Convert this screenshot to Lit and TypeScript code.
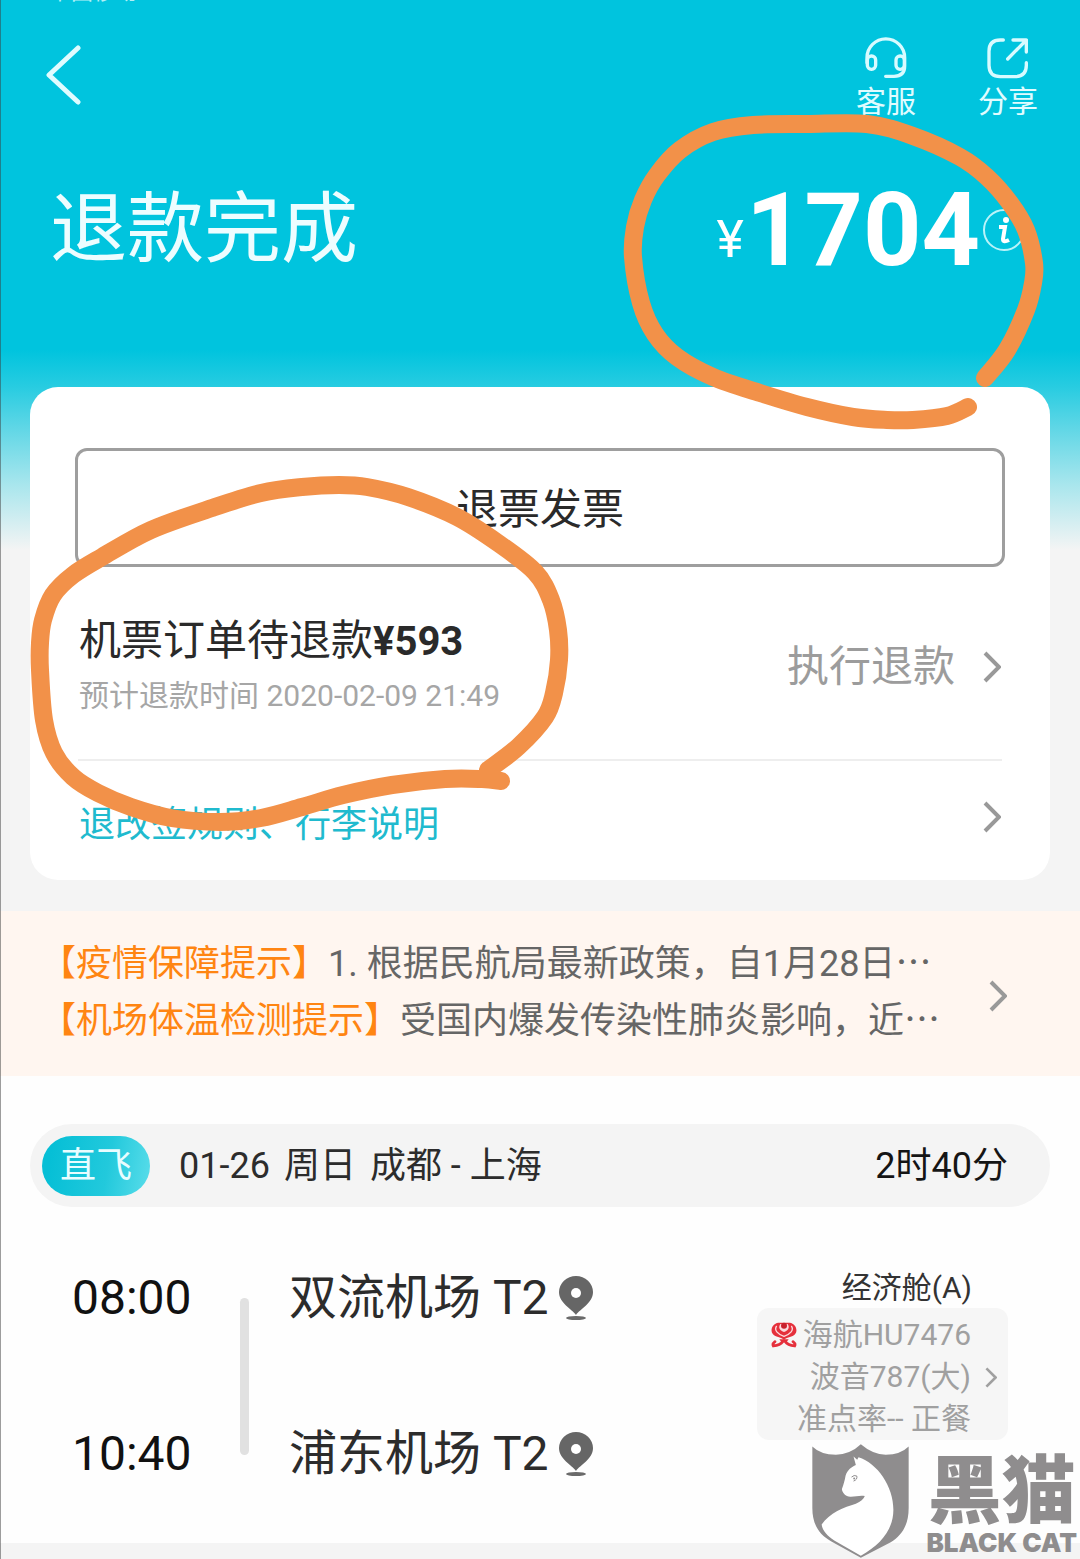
import { LitElement, html, css, svg } from "lit";
import { customElement, property } from "lit/decorators.js";

type Point = [number, number];

const AMOUNT_MARK: Point[] = [
  [968, 407], [947, 416], [913, 420], [887, 420], [853, 417], [807, 407], [760, 393], [713, 377],
  [677, 357], [655, 334], [641, 303], [633, 257], [635, 227], [643, 200], [657, 175], [680, 150],
  [713, 132], [753, 125], [807, 124], [867, 124], [913, 136], [960, 157], [987, 177], [1010, 203],
  [1026, 230], [1034, 263], [1033, 283], [1026, 310], [1007, 350], [985, 378],
];

const PENDING_MARK: Point[] = [
  [501, 781], [482, 779], [445, 779], [392, 785], [343, 795], [302, 807], [261, 818], [220, 822],
  [171, 818], [131, 807], [98, 793], [73, 777], [54, 753], [44, 720], [40, 670], [40, 643],
  [43, 620], [53, 595], [73, 575], [102, 557], [151, 530], [212, 508], [261, 493], [302, 487],
  [339, 485], [367, 487], [408, 497], [457, 517], [498, 543], [535, 572], [551, 600], [558, 630],
  [559, 660], [554, 693], [545, 717], [518, 747], [488, 770],
];

/** Joins the points with a smooth Catmull-Rom curve. */
function smooth(points: Point[]): string {
  let d = `M${points[0][0]} ${points[0][1]}`;
  for (let i = 0; i < points.length - 1; i++) {
    const a = points[Math.max(i - 1, 0)];
    const b = points[i];
    const c = points[i + 1];
    const e = points[Math.min(i + 2, points.length - 1)];
    d += `C${b[0] + (c[0] - a[0]) / 6} ${b[1] + (c[1] - a[1]) / 6} ${c[0] - (e[0] - b[0]) / 6} ${c[1] - (e[1] - b[1]) / 6} ${c[0]} ${c[1]}`;
  }
  return d;
}

const chevron = (size: "large" | "small" = "large") => html`
  <svg class="chevron ${size}" viewBox="0 0 18 32" aria-hidden="true">
    <path d="M2 2 16 16 2 30" fill="none" stroke="currentColor" stroke-width="4" />
  </svg>
`;

@customElement("nav-action")
class NavAction extends LitElement {
  @property() label = "";

  static styles = css`
    :host { display: block; }
    .action {
      display: flex; flex-direction: column; align-items: center;
      padding: 0; border: 0; background: none; color: #e0fcff;
      font: 400 30px/44px Roboto, "Noto Sans CJK SC", sans-serif; cursor: pointer;
    }
  `;

  render() {
    return html`<button class="action" type="button"><slot></slot><span>${this.label}</span></button>`;
  }
}

@customElement("flight-segment")
class FlightSegment extends LitElement {
  static styles = css`
    :host { display: block; padding: 48px 30px 59px; background: #fefefe; }
    .summary {
      display: flex; align-items: center; padding: 12px 42px 11px 12px;
      border-radius: 42px; background: #f4f4f4; color: #2c2c2c; font-size: 36px; line-height: 60px;
    }
    .tag {
      width: 108px; border-radius: 30px; text-align: center; color: #e8fdff;
      background: linear-gradient(100deg, #06bfd6 10%, #22c9dc 60%, #5addea);
    }
    .route { display: flex; gap: 14px; margin-left: 29px; }
    .duration { margin-left: auto; color: #151515; }
    .body { display: flex; align-items: flex-start; padding: 61px 42px 0 42px; }
    .stops { display: grid; grid-auto-rows: 60px; row-gap: 96px; font-size: 48px; line-height: 60px; }
    .times { width: 120px; color: #111; }
    .bar { align-self: center; width: 9px; height: 157px; margin: 0 40px 0 48px; border-radius: 5px; background: #e1e1e1; }
    .airports { color: #2c2c2c; }
    .airport { display: flex; align-items: center; gap: 10px; white-space: nowrap; }
    .pin { width: 34px; height: 44px; }
    .details { display: flex; flex-direction: column; align-items: flex-end; margin-left: auto; font-size: 30px; }
    .cabin { padding-right: 36px; line-height: 40px; color: #333; }
    .plane {
      display: flex; align-items: center; gap: 14px; padding: 6px 11px 0 14px;
      border: 0; border-radius: 12px; background: #f6f6f6; color: #a0a0a0;
      font: inherit; line-height: 42px; text-align: right; white-space: nowrap; cursor: pointer;
    }
    .lines { display: flex; flex-direction: column; }
    .carrier { display: flex; align-items: center; justify-content: flex-end; gap: 6px; }
    .airline { width: 26px; height: 26px; }
    .chevron.small { width: 12px; height: 21px; }
  `;

  private stop(name: string) {
    return html`
      <span class="airport">${name}
        <svg class="pin" viewBox="0 0 34 44" role="img" aria-label="地图">
          <ellipse cx="17" cy="42" rx="10" ry="2" fill="#6a6a6a" />
          <path d="M17 39C13 33 0 27 0 16A17 16 0 0 1 34 16C34 27 21 33 17 39Z" fill="#666" />
          <circle cx="17" cy="17" r="5" fill="#fff" />
        </svg>
      </span>
    `;
  }

  render() {
    return html`
      <div class="summary">
        <span class="tag">直飞</span>
        <span class="route"><span>01-26</span><span>周日</span><span>成都 - 上海</span></span>
        <span class="duration">2时40分</span>
      </div>
      <div class="body">
        <div class="stops times"><time>08:00</time><time>10:40</time></div>
        <div class="bar"></div>
        <div class="stops airports">${this.stop("双流机场 T2")}${this.stop("浦东机场 T2")}</div>
        <div class="details">
          <span class="cabin">经济舱(A)</span>
          <button class="plane" type="button">
            <span class="lines">
              <span class="carrier">
                <svg class="airline" viewBox="0 0 78 78" aria-hidden="true">
                  <path d="M22 2C4 4 -4 26 6 37C14 46 28 44 39 54C50 44 64 46 72 37C82 26 74 4 56 2Z" fill="#e5303c" />
                  <path d="M17 12C8 24 20 36 39 43C58 36 70 24 61 12" fill="none" stroke="#fbdadd" stroke-width="4" />
                  <path d="M28 6C20 18 28 26 39 30C50 26 58 18 50 6Z" fill="#fbdadd" />
                  <circle cx="39" cy="11" r="9" fill="#c9202c" />
                  <path d="M25 52H53L47 60H31Z" fill="#e5303c" />
                  <path d="M36 58C30 66 22 70 7 72Q3 66 12 59M42 58C48 66 56 70 71 72Q75 66 66 59" fill="none" stroke="#e5303c" stroke-width="8" stroke-linecap="round" />
                </svg>
                海航HU7476
              </span>
              <span>波音787(大)</span>
              <span>准点率-- 正餐</span>
            </span>
            ${chevron("small")}
          </button>
        </div>
      </div>
    `;
  }
}

@customElement("black-cat-mark")
class BlackCatMark extends LitElement {
  static styles = css`
    :host { display: flex; align-items: flex-end; gap: 18px; color: #8f8d8e; }
    .shield { width: 97px; height: 114px; }
    .words { display: flex; flex-direction: column; align-items: center; font-weight: 900; white-space: nowrap; }
    .cn { font-family: "Noto Sans CJK SC", sans-serif; font-size: 74px; line-height: 86px; }
    .en { font-family: Inter, sans-serif; font-size: 26px; line-height: 30px; }
  `;

  render() {
    return html`
      <svg class="shield" viewBox="33 43 292 342" aria-hidden="true">
        <path fill="currentColor" d="M34 50Q58 74 105 75Q150 72 180 43Q215 73 255 75Q300 74 324 50V235C324 290 300 320 270 338L180 385L90 335C55 315 34 285 34 235Z" />
        <path fill="#fff" d="M158 80L169 90L173 82C230 100 278 170 278 240C278 300 240 345 180 379L100 333C80 320 65 305 62 285C85 250 130 232 165 222C180 216 188 208 192 199C178 196 165 201 150 201C135 202 124 190 123 178C128 165 132 150 134 138C140 120 152 112 165 106Z" />
        <path d="M152 142Q160 134 168 139Q170 150 158 154" fill="none" stroke="currentColor" stroke-width="3" />
        <circle cx="160" cy="146" r="3" fill="currentColor" />
      </svg>
      <div class="words"><span class="cn">黑猫</span><span class="en">BLACK CAT</span></div>
    `;
  }
}

@customElement("app-root")
class AppRoot extends LitElement {
  static styles = css`
    :host {
      display: block; position: relative; min-height: 100vh; overflow: hidden;
      font-family: Roboto, "Noto Sans CJK SC", sans-serif;
      background: linear-gradient(#00c4de 350px, #28cce1 387px, #62d7e6 430px, #a9e6ed 485px, #f4f4f4 550px);
    }
    :host::before { content: ""; position: absolute; z-index: 3; inset: 0 auto 0 0; width: 1px; background: rgba(60, 60, 60, 0.5); }
    a { color: inherit; text-decoration: none; }
    h1, h2, p { margin: 0; font-weight: 400; }
    .status { display: flex; align-items: flex-end; height: 4px; padding-left: 49px; overflow: hidden; font-size: 22px; line-height: 24px; color: #b5f0f7; }
    .nav { display: flex; align-items: flex-start; justify-content: space-between; padding: 32px 42px 0 44px; }
    .back { display: flex; align-items: center; height: 78px; padding: 0; border: 0; background: none; cursor: pointer; }
    .back-icon { width: 38px; height: 60px; }
    .actions { display: flex; gap: 62px; }
    .nav-icon { width: 44px; height: 44px; fill: none; stroke: #d8fbff; stroke-width: 10; stroke-linecap: round; stroke-linejoin: round; }
    .hero { display: flex; align-items: center; justify-content: space-between; padding: 46px 54px 97px 50px; color: #fff; }
    .title { font-size: 77px; line-height: 120px; color: #edfdff; }
    .amount { display: flex; align-items: flex-end; line-height: 120px; }
    .currency { margin-right: 2px; font-size: 52px; line-height: 100px; }
    .value { font-size: 102px; font-weight: 700; }
    .info { align-self: center; display: flex; margin-left: 2px; padding: 0; border: 0; background: none; }
    .info-icon { width: 44px; height: 44px; }
    .card { margin: 0 30px 31px; padding: 61px 45px 0; border-radius: 28px; background: #fff; }
    .invoice {
      display: block; width: 100%; padding: 4px 0 0; border: 3px solid #9e9e9e; border-radius: 12px; background: none;
      color: #2a2a2a; font: inherit; font-size: 42px; line-height: 109px; cursor: pointer;
    }
    .row { display: flex; align-items: center; justify-content: space-between; margin: 0 3px; padding: 50px 1px 41px 1px; }
    .pending { border-bottom: 2px solid #eee; }
    .pending-text { display: flex; flex-direction: column; gap: 8px; }
    .pending-title { font-size: 42px; line-height: 48px; color: #2a2a2a; }
    .pending-title strong { font-size: 40px; }
    .pending-time { font-size: 30px; line-height: 44px; color: #a6a6a6; }
    .progress { display: flex; align-items: center; gap: 28px; padding-bottom: 2px; font-size: 42px; line-height: 60px; color: #9c9c9c; }
    .rules { padding: 0 1px 8px 1px; font-size: 36px; line-height: 95px; color: #20bace; }
    .rules-text { padding-top: 18px; }
    .rules { line-height: 93px; }
    .chevron { flex: none; width: 18px; height: 32px; color: #999; }
    .notice { display: flex; align-items: center; justify-content: space-between; padding: 25px 73px 21px 40px; background: #fff6f0; color: #666; font-size: 36px; line-height: 57px; }
    .notice-lines { padding-bottom: 5px; white-space: nowrap; }
    .topic, .dots { font-family: "Noto Sans CJK SC", sans-serif; line-height: 36px; }
    .topic { color: #ff8512; }
    .tail { height: 16px; background: #f4f4f4; }
    .marks { position: absolute; z-index: 1; top: 0; left: 0; width: 1080px; height: 860px; pointer-events: none; }
    .watermark { position: absolute; z-index: 2; right: 3px; bottom: 1px; }
  `;

  render() {
    return html`
      <div class="status">中国移动</div>
      <nav class="nav">
        <button class="back" type="button" aria-label="返回">
          <svg class="back-icon" viewBox="0 0 38 60" aria-hidden="true">
            <path d="M34 3 5 30 34 57" fill="none" stroke="#dffcff" stroke-width="5" stroke-linecap="round" stroke-linejoin="round" />
          </svg>
        </button>
        <div class="actions">
          <nav-action label="客服">
            <svg class="nav-icon" viewBox="795 105 132 132" aria-hidden="true">
              <path d="M804 185V170A56 56 0 0 1 917 170V195Q917 226 885 226H860" />
              <rect x="805" y="165" width="25" height="40" rx="12" />
              <rect x="891" y="165" width="25" height="40" rx="12" />
            </svg>
          </nav-action>
          <nav-action label="分享">
            <svg class="nav-icon" viewBox="1160 109 132 132" aria-hidden="true">
              <path d="M1212 121H1203Q1169 121 1169 155V197Q1169 231 1203 231H1247Q1281 231 1281 197V189M1241 121H1281V157M1281 121 1225 178" />
            </svg>
          </nav-action>
        </div>
      </nav>
      <header class="hero">
        <h1 class="title">退款完成</h1>
        <div class="amount">
          <span class="currency">¥</span><span class="value">1704</span>
          <button class="info" type="button" aria-label="退款明细">
            <svg class="info-icon" viewBox="0 0 44 44" aria-hidden="true">
              <circle cx="22" cy="22" r="20" fill="none" stroke="#b9f3f9" stroke-width="2" />
              <circle cx="24" cy="12" r="3" fill="#fff" />
              <path d="M17 19H23L21 31Q21 35 27 32" fill="none" stroke="#fff" stroke-width="4" />
            </svg>
          </button>
        </div>
      </header>
      <main>
        <section class="card">
          <button class="invoice" type="button">退票发票</button>
          <div class="row pending">
            <div class="pending-text">
              <h2 class="pending-title">机票订单待退款<strong>¥593</strong></h2>
              <p class="pending-time">预计退款时间 2020-02-09 21:49</p>
            </div>
            <a class="progress" href="#progress">执行退款${chevron()}</a>
          </div>
          <a class="row rules" href="#rules"><span class="rules-text">退改签规则、行李说明</span>${chevron()}</a>
        </section>
        <a class="notice" href="#notice">
          <div class="notice-lines">
            <p><span class="topic">【疫情保障提示】</span>1. 根据民航局最新政策，自1月28日<span class="dots" lang="zh-CN">⋯</span></p>
            <p><span class="topic">【机场体温检测提示】</span>受国内爆发传染性肺炎影响，近<span class="dots" lang="zh-CN">⋯</span></p>
          </div>
          ${chevron()}
        </a>
        <flight-segment></flight-segment>
        <div class="tail"></div>
      </main>
      <svg class="marks" viewBox="0 0 1080 860" aria-hidden="true">
        ${[AMOUNT_MARK, PENDING_MARK].map(
          (points) => svg`<path d=${smooth(points)} fill="none" stroke="#f29149" stroke-width="18" stroke-linecap="round" stroke-linejoin="round" />`
        )}
      </svg>
      <black-cat-mark class="watermark"></black-cat-mark>
    `;
  }
}
